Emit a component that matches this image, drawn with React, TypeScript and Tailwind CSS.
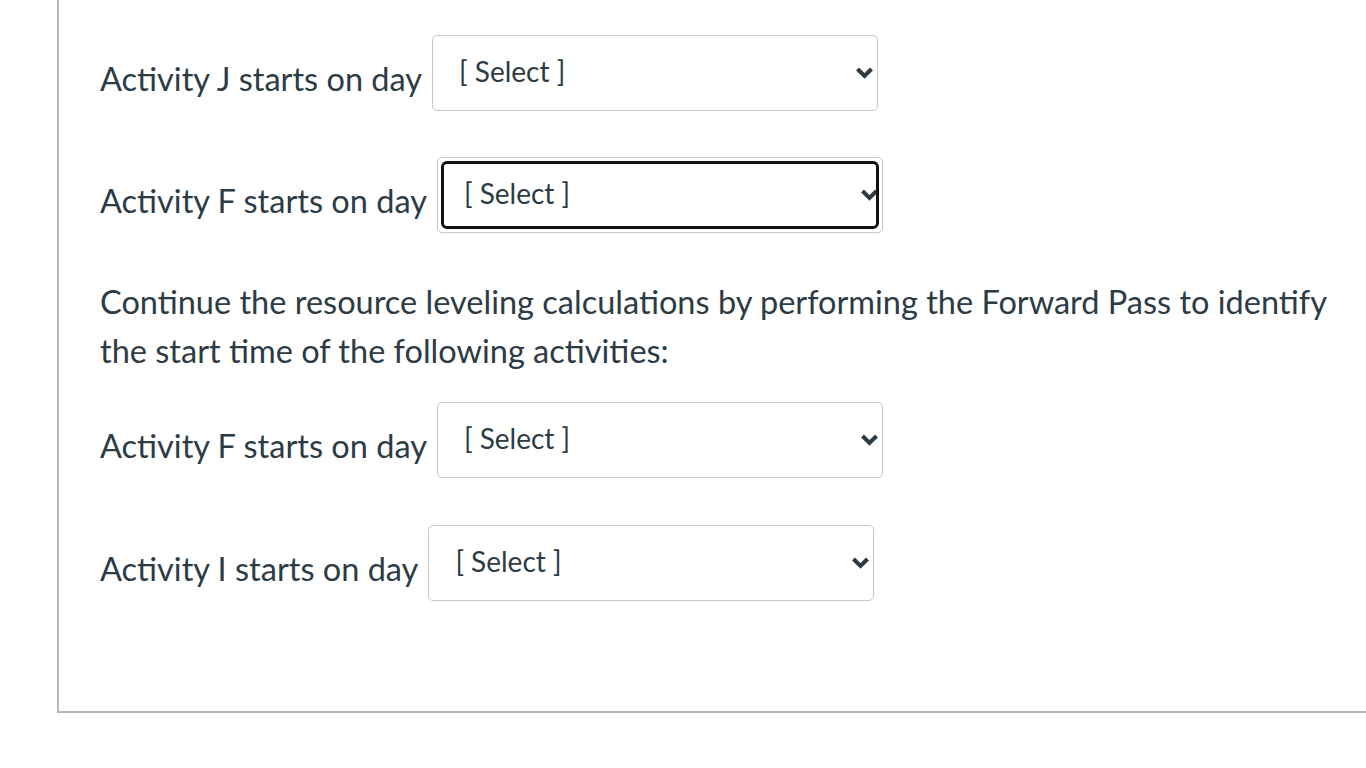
const rows = {
  top: [
    { label: 'Activity J starts on day', focused: false },
    { label: 'Activity F starts on day', focused: true },
  ],
  bottom: [
    { label: 'Activity F starts on day', focused: false },
    { label: 'Activity I starts on day', focused: false },
  ],
};

function Chevron() {
  return (
    <svg
      className="pointer-events-none absolute right-[4px] top-[31px] h-[14px] w-[19px]"
      viewBox="0 0 19 14"
      fill="none"
      aria-hidden
    >
      <path d="M2.5 3 L9.5 10 L16.5 3" stroke="#2d3b45" strokeWidth="4" />
    </svg>
  );
}

function SelectRow({ label, focused }: { label: string; focused: boolean }) {
  return (
    <div className="flex items-start gap-[10px]">
      <span className="mt-[20px] shrink-0 whitespace-nowrap">{label}</span>
      <div className="relative h-[76px] w-[446px] shrink-0">
        <select
          defaultValue=""
          className="h-full w-full appearance-none rounded-[5px] border border-[#c4c8cb] bg-white pb-[4px] pl-[26px] text-[28px] text-[#2d3b45] outline-none"
        >
          <option value="">[ Select ]</option>
          <option value="0">0</option>
          <option value="1">1</option>
        </select>
        <Chevron />
        {focused && (
          <div className="pointer-events-none absolute inset-[4px] rounded-[6px] border-[3px] border-[#111]" />
        )}
      </div>
    </div>
  );
}

export default function App() {
  return (
    <div className="h-[768px] w-[1366px] overflow-hidden bg-white font-['Lato','Open_Sans',sans-serif] text-[32.5px] leading-normal text-[#2d3b45]">
      <div className="ml-[57px] w-[1320px] border-b-2 border-l-2 border-[#b8b8b8] pb-[110px] pl-[41px] pt-[35px]">
        <div className="flex flex-col gap-[46px]">
          {rows.top.map((r, i) => (
            <SelectRow key={i} {...r} />
          ))}
        </div>
        <p className="mt-[45px] max-w-[1240px]">
          Continue the resource leveling calculations by performing the Forward Pass to identify the
          start time of the following activities:
        </p>
        <div className="mt-[26px] flex flex-col gap-[47px]">
          {rows.bottom.map((r, i) => (
            <SelectRow key={i} {...r} />
          ))}
        </div>
      </div>
    </div>
  );
}
